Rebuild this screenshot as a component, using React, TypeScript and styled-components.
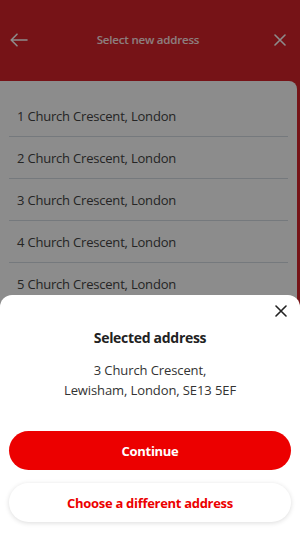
import styled, { createGlobalStyle } from 'styled-components'

const addresses = [
  '1 Church Crescent, London',
  '2 Church Crescent, London',
  '3 Church Crescent, London',
  '4 Church Crescent, London',
  '5 Church Crescent, London',
]

const GlobalStyle = createGlobalStyle`
  html, body {
    margin: 0;
    padding: 0;
    background: #ffffff;
  }
  * {
    box-sizing: border-box;
  }
`

const Screen = styled.div`
  position: relative;
  width: 300px;
  height: 541px;
  overflow: hidden;
  background: #d8232a;
  font-family: 'Open Sans', 'Noto Sans', sans-serif;
`

const Header = styled.header`
  height: 81px;
  display: flex;
  align-items: center;
  justify-content: space-between;
  padding: 0 14px 2px 10px;
  color: #ffffff;
`

const HeaderTitle = styled.h1`
  margin: 0 6px 0 0;
  font-size: 11.5px;
  font-weight: 600;
  letter-spacing: -0.2px;
  color: #ffe6e6;
`

const IconButton = styled.button`
  all: unset;
  display: flex;
  align-items: center;
  justify-content: center;
  color: ${({ color }) => color ?? '#ffffff'};
`

const Card = styled.section`
  height: 460px;
  margin-right: 3px;
  background: #ffffff;
  border-top-right-radius: 8px;
  padding: 14px 9px 0;
`

const Row = styled.div`
  height: 42px;
  display: flex;
  align-items: center;
  padding-left: 8px;
  border-bottom: 1px solid #d6dde3;
  font-size: 13px;
  color: #444444;
  letter-spacing: -0.2px;
`

const Dim = styled.div`
  position: absolute;
  inset: 0;
  background: rgba(0, 0, 0, 0.45);
`

const Sheet = styled.div`
  position: absolute;
  left: 0;
  right: 0;
  bottom: 0;
  height: 246px;
  background: #ffffff;
  border-radius: 12px 12px 0 0;
  padding: 10px 9px 19px;
  display: flex;
  flex-direction: column;
`

const CloseRow = styled.div`
  display: flex;
  justify-content: flex-end;
  padding-right: 4px;
`

const SheetTitle = styled.h2`
  margin: 11px 0 0;
  text-align: center;
  font-size: 14px;
  line-height: 20px;
  font-weight: 700;
  letter-spacing: -0.3px;
  color: #222222;
`

const AddressText = styled.p`
  margin: 13px 0 0;
  text-align: center;
  font-size: 13px;
  line-height: 19.5px;
  color: #333333;
  letter-spacing: -0.1px;
`

const Actions = styled.div`
  margin-top: auto;
  display: flex;
  flex-direction: column;
  gap: 13px;
`

const Button = styled.button<{ $primary?: boolean }>`
  all: unset;
  height: 39px;
  border-radius: 20px;
  display: flex;
  align-items: center;
  justify-content: center;
  font-family: 'Open Sans', 'Noto Sans', sans-serif;
  font-size: 13px;
  font-weight: 700;
  letter-spacing: -0.3px;
  background: ${({ $primary }) => ($primary ? '#ec0000' : '#ffffff')};
  color: ${({ $primary }) => ($primary ? '#ffffff' : '#ec0000')};
  box-shadow: ${({ $primary }) =>
    $primary ? 'none' : '0 1px 5px rgba(0, 0, 0, 0.14)'};
`

const ArrowLeft = () => (
  <svg width='18' height='14' viewBox='0 0 18 14' fill='none'>
    <path
      d='M17 7H1.5M7 1.2L1.2 7L7 12.8'
      stroke='currentColor'
      strokeWidth='1.6'
      strokeLinecap='round'
      strokeLinejoin='round'
    />
  </svg>
)

const Cross = ({ size = 12 }: { size?: number }) => (
  <svg width={size} height={size} viewBox='0 0 12 12' fill='none'>
    <path
      d='M1 1L11 11M11 1L1 11'
      stroke='currentColor'
      strokeWidth='1.6'
      strokeLinecap='round'
    />
  </svg>
)

export default function App() {
  return (
    <>
      <GlobalStyle />
      <Screen>
        <Header>
          <IconButton>
            <ArrowLeft />
          </IconButton>
          <HeaderTitle>Select new address</HeaderTitle>
          <IconButton>
            <Cross />
          </IconButton>
        </Header>
        <Card>
          {addresses.map(address => (
            <Row key={address}>{address}</Row>
          ))}
        </Card>
        <Dim />
        <Sheet>
          <CloseRow>
            <IconButton color='#222222'>
              <Cross size={12} />
            </IconButton>
          </CloseRow>
          <SheetTitle>Selected address</SheetTitle>
          <AddressText>
            3 Church Crescent,
            <br />
            Lewisham, London, SE13 5EF
          </AddressText>
          <Actions>
            <Button $primary>Continue</Button>
            <Button>Choose a different address</Button>
          </Actions>
        </Sheet>
      </Screen>
    </>
  )
}
